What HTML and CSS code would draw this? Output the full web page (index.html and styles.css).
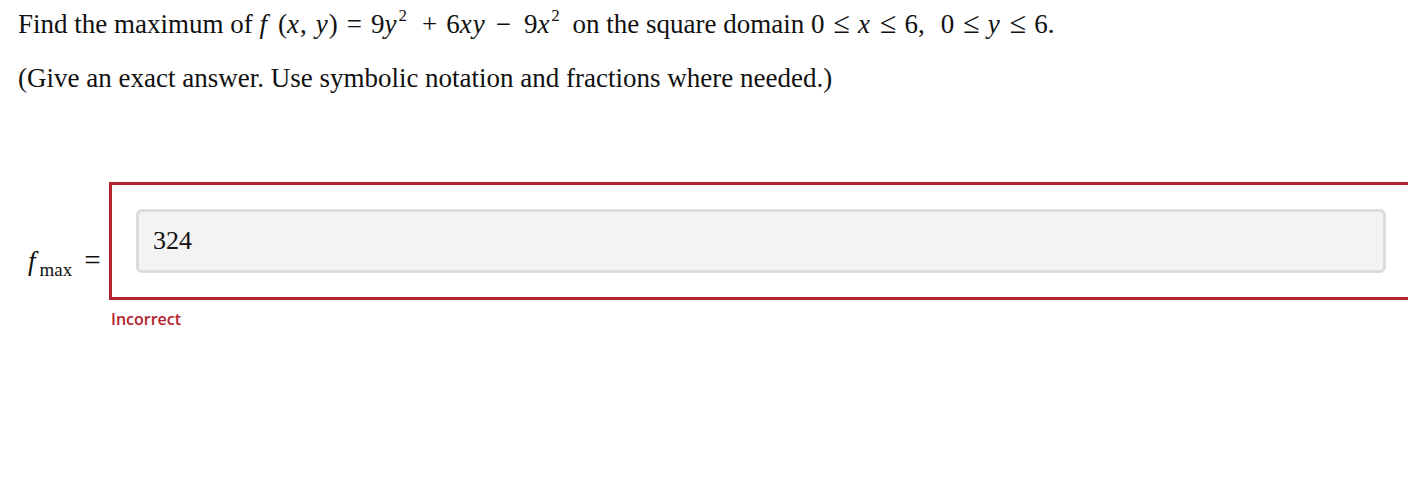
FILE: index.html
```html
<!DOCTYPE html>
<html>
<head>
<meta charset="utf-8">
<link rel="stylesheet" href="styles.css">
</head>
<body>
<div class="page">
  <p class="q1">Find the maximum of <span class="m"><i>f</i><span class="th"></span>(<i>x</i>,<span class="cm"></span><i>y</i>)<span class="op">=</span>9<i>y</i><sup>2</sup><span class="op">+</span>6<i class="v">x</i><i class="v">y</i><span class="op mi">&minus;</span>9<i>x</i><sup>2</sup></span> on the square domain <span class="m">0<span class="op le">&le;</span><i>x</i><span class="op le">&le;</span>6,<span class="cm wide"></span>0<span class="op le">&le;</span><i>y</i><span class="op le">&le;</span>6</span>.</p>
  <p class="q2">(Give an exact answer. Use symbolic notation and fractions where needed.)</p>
  <div class="answer">
    <div class="label"><i>f</i><sub>max</sub><span class="eq">=</span></div>
    <div class="field">
      <div class="box">
        <div class="input">324</div>
      </div>
      <div class="status">Incorrect</div>
    </div>
  </div>
</div>
</body>
</html>
```

FILE: styles.css
```css
html, body {
  margin: 0;
  padding: 0;
  background: #fff;
  overflow: hidden;
}
.page {
  padding-left: 18px;
  font-family: "Liberation Serif", "Times New Roman", serif;
  color: #111;
}
.q1, .q2 {
  margin: 0;
  font-size: 27px;
  line-height: 30px;
  white-space: nowrap;
}
.q1 {
  padding-top: 9px;
}
.q2 {
  margin-top: 24px;
}
.m i {
  margin-right: 1px;
}
.th {
  display: inline-block;
  width: 10px;
}
.cm {
  display: inline-block;
  width: 9px;
}
.cm.wide {
  width: 16px;
}
.op {
  display: inline-block;
  margin: 0 9px;
}
.mi {
  margin: 0 13px 0 10px;
}
.le {
  font-size: 30px;
  line-height: 0;
  margin: 0 8px 0 9px;
}
.v {
  margin-right: 4px;
}
sup {
  font-size: 17px;
  line-height: 0;
  vertical-align: 12px;
  margin-left: 1px;
  margin-right: 6px;
}
.answer {
  display: flex;
  margin-top: 89px;
}
.label {
  flex-shrink: 0;
  width: 91px;
  font-size: 27px;
  padding-top: 62px;
  padding-left: 10px;
  box-sizing: border-box;
  white-space: nowrap;
}
.label sub {
  font-size: 19px;
  vertical-align: -6px;
  margin-left: 4px;
}
.eq {
  margin-left: 12px;
  font-size: 29px;
}
.field {
  flex-shrink: 0;
  display: flex;
  flex-direction: column;
}
.box {
  width: 1304px;
  box-sizing: border-box;
  border: 3px solid #b1232e;
  padding: 24px;
}
.input {
  height: 64px;
  box-sizing: border-box;
  border: 3px solid #dcdcdc;
  border-radius: 6px;
  background: #f3f3f3;
  font-size: 26px;
  line-height: 58px;
  padding-left: 14px;
  color: #111;
}
.status {
  margin-top: 8px;
  margin-left: 2px;
  font-family: "Open Sans", "Noto Sans", sans-serif;
  font-size: 16px;
  font-weight: 600;
  color: #b1232e;
}
```
